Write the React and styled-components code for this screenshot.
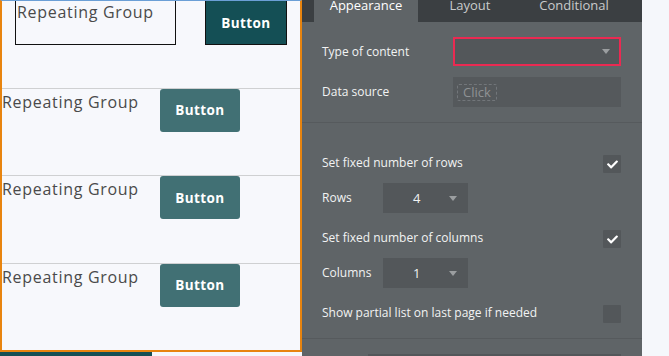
import React from "react";
import styled, { createGlobalStyle } from "styled-components";
import { FaCheck } from "react-icons/fa";

const GlobalStyle = createGlobalStyle`
  html, body {
    margin: 0;
    padding: 0;
    background: #f5f7fb;
    overflow: hidden;
  }
`;

const rows = [1, 2, 3, 4];

export default function App() {
  return (
    <>
      <GlobalStyle />
      <Page>
        <EditorColumn>
          <Canvas>
            {rows.map((r) =>
              r === 1 ? (
                <Cell key={r} $first>
                  <OutlinedText>Repeating Group</OutlinedText>
                  <SelectedButton>Button</SelectedButton>
                </Cell>
              ) : (
                <Cell key={r}>
                  <CellText>Repeating Group</CellText>
                  <CellButton>Button</CellButton>
                </Cell>
              )
            )}
          </Canvas>
          <BelowStrip>
            <TealBlock />
          </BelowStrip>
        </EditorColumn>

        <Panel>
          <TabBar>
            <Tab $active>Appearance</Tab>
            <Tab>Layout</Tab>
            <Tab>Conditional</Tab>
          </TabBar>

          <Section $top={15}>
            <FieldRow>
              <Label $width={131}>Type of content</Label>
              <Dropdown $invalid>
                <Caret />
              </Dropdown>
            </FieldRow>
            <FieldRow>
              <Label $width={131}>Data source</Label>
              <Expression>
                <ClickChip>Click</ClickChip>
              </Expression>
            </FieldRow>
          </Section>

          <Section $top={32} $gap={0}>
            <CheckRow>
              <Label $raise>Set fixed number of rows</Label>
              <Checkbox>
                <FaCheck size={11} />
              </Checkbox>
            </CheckRow>
            <NumberRow>
              <Label $width={61}>Rows</Label>
              <NumberSelect>
                <span>4</span>
                <Caret />
              </NumberSelect>
            </NumberRow>
            <CheckRow>
              <Label $raise>Set fixed number of columns</Label>
              <Checkbox>
                <FaCheck size={11} />
              </Checkbox>
            </CheckRow>
            <NumberRow>
              <Label $width={61}>Columns</Label>
              <NumberSelect>
                <span>1</span>
                <Caret />
              </NumberSelect>
            </NumberRow>
            <CheckRow $last>
              <Label $raise>Show partial list on last page if needed</Label>
              <Checkbox />
            </CheckRow>
          </Section>

          <Section $top={15} $noBorder>
            <NextField />
          </Section>
        </Panel>

        <Filler />
      </Page>
    </>
  );
}

const Page = styled.div`
  display: flex;
  width: 669px;
  height: 356px;
  overflow: hidden;
  background: #f5f7fb;
`;

const EditorColumn = styled.div`
  width: 302px;
  display: flex;
  flex-direction: column;
  flex-shrink: 0;
`;

const Canvas = styled.div`
  box-sizing: border-box;
  height: 352px;
  display: flex;
  flex-direction: column;
  background: #f7f8fc;
  border: 2px solid #e8840f;
  border-top: 1px solid #6b9fd6;
`;

const Cell = styled.div`
  flex: 1;
  display: flex;
  align-items: flex-start;
  border-top: ${(p) => (p.$first ? "none" : "1px solid #cfd0d2")};
  padding-left: ${(p) => (p.$first ? "13px" : "0")};
  font-family: "Open Sans", "Liberation Sans", sans-serif;
`;

const CellText = styled.div`
  width: 158px;
  padding-top: 3px;
  font-size: 16px;
  line-height: 20px;
  color: #4a4a4a;
  letter-spacing: 0.7px;
  white-space: nowrap;
`;

const OutlinedText = styled(CellText)`
  box-sizing: border-box;
  width: 161px;
  height: 44px;
  padding: 1px 0 0 1px;
  border: 1px solid #111;
  border-top: none;
  margin-right: 29px;
`;

const CellButton = styled.div`
  box-sizing: border-box;
  width: 80px;
  height: 43px;
  display: flex;
  align-items: center;
  justify-content: center;
  background: #417074;
  color: #fff;
  border-radius: 3px;
  font-weight: 700;
  font-size: 13.5px;
  letter-spacing: 0.4px;
`;

const SelectedButton = styled(CellButton)`
  width: 82px;
  height: 44px;
  background: #144f55;
  border: 1px solid #111;
  border-top: none;
  border-radius: 0;
  padding-top: 1px;
`;

const BelowStrip = styled.div`
  flex: 1;
  display: flex;
  background: #f5f7fb;
`;

const TealBlock = styled.div`
  width: 152px;
  background: #154f55;
`;

const Panel = styled.div`
  width: 340px;
  flex-shrink: 0;
  display: flex;
  flex-direction: column;
  background: #5f6467;
  font-family: "Open Sans", "Liberation Sans", sans-serif;
  color: #f2f3f3;
`;

const TabBar = styled.div`
  height: 22px;
  flex-shrink: 0;
  display: flex;
  padding-left: 12px;
  background: #3b3f42;
`;

const Tab = styled.div`
  width: 104px;
  height: 22px;
  text-align: center;
  font-size: 13px;
  line-height: 11px;
  color: ${(p) => (p.$active ? "#ffffff" : "#c9cbcc")};
  background: ${(p) => (p.$active ? "#5f6467" : "transparent")};
`;

const Section = styled.div`
  display: flex;
  flex-direction: column;
  gap: ${(p) => p.$gap ?? 11}px;
  padding: ${(p) => p.$top}px 21px 15px 20px;
  border-bottom: ${(p) => (p.$noBorder ? "none" : "1px solid #565a5d")};
`;

const FieldRow = styled.div`
  display: flex;
  align-items: center;
`;

const Label = styled.div`
  width: ${(p) => (p.$width ? `${p.$width}px` : "auto")};
  flex-shrink: 0;
  font-size: 12px;
  line-height: 16px;
  margin-top: ${(p) => (p.$raise ? -2 : 0)}px;
  white-space: nowrap;
`;

const Dropdown = styled.div`
  box-sizing: border-box;
  flex: 0 0 168px;
  height: 29px;
  display: flex;
  align-items: center;
  justify-content: flex-end;
  padding-right: 9px;
  background: #53575a;
  border: 2px solid ${(p) => (p.$invalid ? "#ea2a52" : "transparent")};
`;

const Caret = styled.span`
  width: 0;
  height: 0;
  border-left: 4px solid transparent;
  border-right: 4px solid transparent;
  border-top: 5px solid #9b9ea0;
`;

const Expression = styled.div`
  box-sizing: border-box;
  flex: 0 0 168px;
  height: 30px;
  display: flex;
  align-items: center;
  padding-left: 4px;
  background: #55595c;
`;

const ClickChip = styled.span`
  box-sizing: border-box;
  height: 17px;
  display: flex;
  align-items: center;
  padding: 0 5px;
  border: 1px dashed #72767a;
  border-radius: 2px;
  font-size: 13px;
  color: #8f9294;
`;

const CheckRow = styled.div`
  height: 18px;
  display: flex;
  align-items: center;
  justify-content: space-between;
  margin-bottom: ${(p) => (p.$last ? 0 : 10)}px;
`;

const Checkbox = styled.div`
  width: 18px;
  height: 18px;
  display: flex;
  align-items: center;
  justify-content: center;
  background: #53575a;
  border-radius: 1px;
  color: #fff;
`;

const NumberRow = styled.div`
  height: 30px;
  display: flex;
  align-items: center;
  margin-bottom: 17px;
`;

const NumberSelect = styled.div`
  box-sizing: border-box;
  width: 85px;
  height: 30px;
  display: flex;
  align-items: center;
  justify-content: space-between;
  padding: 0 11px 0 30px;
  background: #53575a;
  font-size: 13px;
`;

const NextField = styled.div`
  margin-left: 46px;
  height: 30px;
  background: #53575a;
`;

const Filler = styled.div`
  flex: 1;
  background: #f5f7fb;
`;
